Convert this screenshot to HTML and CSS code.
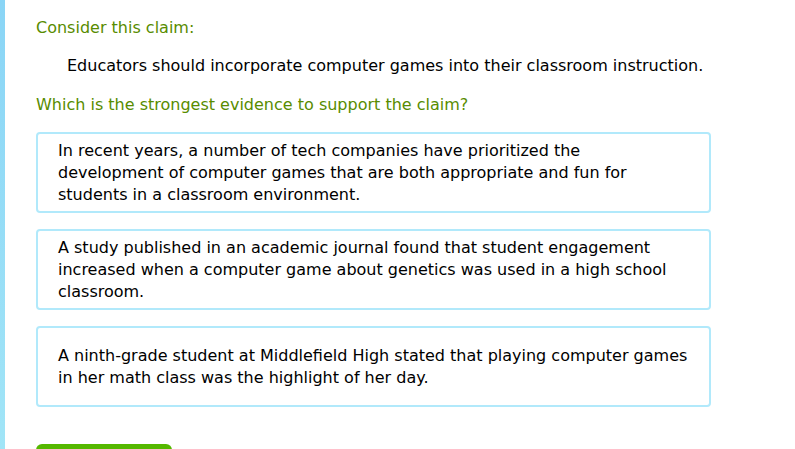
FILE: index.html
```html
<!DOCTYPE html>
<html>
<head>
<meta charset="utf-8">
<link rel="stylesheet" href="styles.css">
</head>
<body>
<div class="page">
  <div class="sidebar"></div>
  <main class="content">
    <p class="prompt first">Consider this claim:</p>
    <p class="claim">Educators should incorporate computer games into their classroom instruction.</p>
    <p class="prompt">Which is the strongest evidence to support the claim?</p>
    <div class="choices">
      <div class="choice">In recent years, a number of tech companies have prioritized the development of computer games that are both appropriate and fun for students in a classroom environment.</div>
      <div class="choice">A study published in an academic journal found that student engagement increased when a computer game about genetics was used in a high school classroom.</div>
      <div class="choice">A ninth-grade student at Middlefield High stated that playing computer games in her math class was the highlight of her day.</div>
    </div>
    <button class="submit" aria-label="Submit"></button>
  </main>
</div>
</body>
</html>
```
FILE: styles.css
```css
html, body {
  margin: 0;
  padding: 0;
  background: #fff;
}
body {
  font-family: "DejaVu Sans", Verdana, sans-serif;
  font-size: 16px;
  line-height: 22px;
  color: #000;
}
.page {
  display: flex;
  min-height: 449px;
}
.sidebar {
  width: 5px;
  flex: none;
  background: linear-gradient(to bottom, #8ad5f6, #a3e6f7);
}
.content {
  padding: 17px 0 0 31px;
  width: 675px;
}
.prompt {
  margin: 17px 0 0;
  color: #588c00;
}
.prompt.first {
  margin-top: 0;
}
.claim {
  margin: 16px 0 0 31px;
}
.choices {
  margin-top: 16px;
  display: flex;
  flex-direction: column;
  gap: 16px;
}
.choice {
  box-sizing: border-box;
  min-height: 81px;
  border: 2px solid #b1e9fb;
  border-radius: 4px;
  padding: 6px 20px 5px;
  display: flex;
  align-items: center;
}
.submit {
  display: block;
  margin-top: 37px;
  width: 136px;
  height: 40px;
  border: none;
  border-radius: 6px;
  background: #55b800;
}
```
